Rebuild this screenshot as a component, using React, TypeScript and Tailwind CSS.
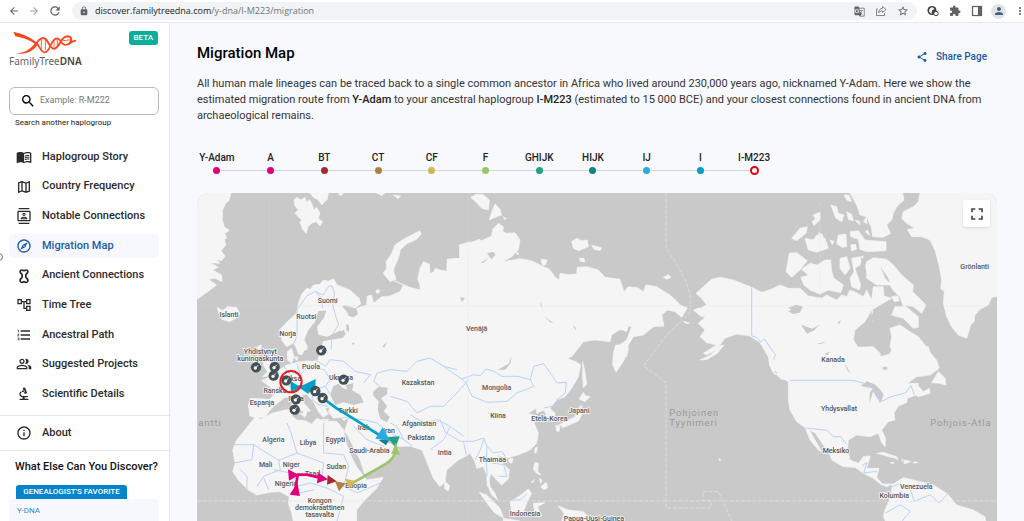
import React from "react";
import type { IconType } from "react-icons";
import {
  MdArrowBack,
  MdArrowForward,
  MdBiotech,
  MdExtension,
  MdFormatListNumbered,
  MdGTranslate,
  MdLock,
  MdMenuBook,
  MdMoreVert,
  MdOutlineAccountTree,
  MdOutlineContacts,
  MdOutlineExplore,
  MdOutlineInfo,
  MdOutlineMap,
  MdOutlinePeopleAlt,
  MdPerson,
  MdRefresh,
  MdSearch,
  MdShare,
  MdStarBorder,
  MdFullscreen,
} from "react-icons/md";

function BoneIcon({ className }: { className?: string }) {
  return (
    <svg viewBox="0 0 24 24" className={className} fill="none" stroke="currentColor" strokeWidth="2.6" strokeLinejoin="round">
      <path d="M9 3 C6.500 3 5.500 5 6.500 7 C8 8.500 9.500 9 9.500 12 C9.500 15 8 15.500 6.500 17 C5.500 19 6.500 21.500 9 21.500 C10.500 21.500 11 20.500 12 20.500 C13 20.500 13.500 21.500 15 21.500 C17.500 21.500 18.500 19 17.500 17 C16 15.500 14.500 15 14.500 12 C14.500 9 16 8.500 17.500 7 C18.500 5 17.500 3 15 3 C13.500 3 13 4 12 4 C11 4 10.500 3 9 3Z" />
    </svg>
  );
}

function ShareArrowIcon() {
  return (
    <svg viewBox="0 0 24 24" className="size-3" fill="none" stroke="#80868b" strokeWidth="2" strokeLinejoin="round">
      <path d="M6 8 H3 V21 H19 V16" />
      <path d="M15 3 L22 9 L15 15 V12 C11 12 8.500 13 7 16 C7 11 10 7 15 6.500Z" />
    </svg>
  );
}

function GlobeBadgeIcon() {
  return (
    <svg viewBox="0 0 24 24" className="size-3">
      <circle cx="10" cy="11" r="9" fill="#3c4043" />
      <path d="M5 8 L10 4 L15 8 L10 11 L9 18 L4 13Z" fill="#fff" />
      <circle cx="18" cy="17" r="4.500" fill="#fff" stroke="#3c4043" strokeWidth="2" />
    </svg>
  );
}

function SidePanelIcon() {
  return (
    <svg viewBox="0 0 24 24" className="size-3">
      <rect x="3" y="3" width="18" height="18" fill="none" stroke="#5f6368" strokeWidth="2.500" />
      <rect x="14" y="3" width="7" height="18" fill="#5f6368" />
    </svg>
  );
}

function Helix() {
  return (
    <svg viewBox="0 0 190 72" className="h-6 w-16" fill="none" stroke="#f9471d" strokeLinecap="round" aria-hidden="true">
      <path d="M0 2 C30 9 56 20 76 40 L70 44 C56 30 36 22 6 16Z" fill="#f9471d" stroke="none" />
      <path d="M6 68 C34 66 50 56 62 40 L72 42 C58 64 36 70 6 68Z" fill="#f9471d" stroke="none" />
      <path d="M66 42 C74 28 80 21 90 21 C106 22 106 53 122 53 C140 52 140 17 162 16 C174 16 178 26 168 38" strokeWidth="6" />
      <path d="M70 36 C80 48 82 64 94 64 C112 62 112 24 130 22 C144 22 142 42 156 42 C168 41 172 32 186 29" strokeWidth="5" />
      <path d="M84 28 V54 M96 26 V56 M122 28 V48 M132 26 V46 M150 29 L174 26" strokeWidth="2.500" />
    </svg>
  );
}

function BrowserBar() {
  return (
    <header className="flex h-[23px] shrink-0 items-center gap-3 border-b border-gray-200 bg-white pr-0.5 pl-2 text-[#5f6368]">
      <div className="flex w-[54px] shrink-0 items-center justify-between">
        <button aria-label="Back"><MdArrowBack className="size-3" /></button>
        <button aria-label="Forward"><MdArrowForward className="size-3 text-gray-400" /></button>
        <button aria-label="Reload"><MdRefresh className="size-3.5" /></button>
      </div>
      <div className="-ml-0.5 flex h-[18px] flex-1 items-center rounded-full bg-[#f1f3f4] pr-2 pl-[7px]">
        <MdLock className="size-2.5" />
        <span className="ml-1.5 font-['Open_Sans',sans-serif] text-[9px] text-[#70757a]">
          <span className="text-[#202124]">discover.familytreedna.com</span>/y-dna/I-M223/migration
        </span>
        <div className="ml-auto flex items-center gap-2.5">
          <button aria-label="Translate"><MdGTranslate className="size-[11px]" /></button>
          <button aria-label="Share"><ShareArrowIcon /></button>
          <button aria-label="Bookmark"><MdStarBorder className="size-3" /></button>
        </div>
      </div>
      <div className="-ml-0.5 flex items-center gap-2">
        <button aria-label="Data saver"><GlobeBadgeIcon /></button>
        <button aria-label="Extensions" className="ml-0.5"><MdExtension className="size-3" /></button>
        <button aria-label="Side panel" className="ml-0.5"><SidePanelIcon /></button>
        <button aria-label="Profile" className="flex size-[15px] items-center justify-center rounded-full bg-[#dfe3ea]">
          <MdPerson className="size-3 text-[#4a5a78]" />
        </button>
        <button aria-label="More" className="-mr-1"><MdMoreVert className="size-3" /></button>
      </div>
    </header>
  );
}

type Item = { label: string; icon: IconType | typeof BoneIcon; active?: boolean };

const items: Item[] = [
  { label: "Haplogroup Story", icon: MdMenuBook },
  { label: "Country Frequency", icon: MdOutlineMap },
  { label: "Notable Connections", icon: MdOutlineContacts },
  { label: "Migration Map", icon: MdOutlineExplore, active: true },
  { label: "Ancient Connections", icon: BoneIcon },
  { label: "Time Tree", icon: MdOutlineAccountTree },
  { label: "Ancestral Path", icon: MdFormatListNumbered },
  { label: "Suggested Projects", icon: MdOutlinePeopleAlt },
  { label: "Scientific Details", icon: MdBiotech },
];

function NavLink({ label, icon: Icon, active }: Item) {
  return (
    <a
      href="#"
      className={
        active
          ? "flex h-6 items-center gap-2.5 rounded bg-[#f7f8fd] pl-[7px] text-[11px] font-medium text-[#1b5ba5]"
          : "flex h-6 items-center gap-2.5 rounded pl-[7px] text-[11px] font-medium text-[#2b2b2b]"
      }
    >
      <Icon className="size-4" />
      {label}
    </a>
  );
}

function Sidebar() {
  return (
    <aside className="relative flex w-[170px] shrink-0 flex-col border-r border-gray-200 bg-white">
      <div className="flex items-start justify-between pt-2 pr-[11px] pl-[9px]">
        <a href="#" className="flex flex-col">
          <span className="pl-1"><Helix /></span>
          <span className="font-['Noto_Sans',sans-serif] text-[10px] leading-[13px] text-[#666]">
            FamilyTree<b className="font-semibold text-[#444]">DNA</b>
          </span>
        </a>
        <span className="rounded-[3px] bg-[#0aae9c] px-[5px] text-[8px] leading-[14px] font-medium text-white">BETA</span>
      </div>
      <div className="pt-[19px] pr-2.5 pl-[9px]">
        <div className="flex h-7 items-center gap-1 rounded-md border border-[#bbb] pl-2.5">
          <MdSearch className="size-4 shrink-0 text-black" />
          <input
            id="haplogroup"
            placeholder="Example: R-M222"
            className="w-full min-w-0 bg-transparent text-[9px] outline-none placeholder:text-[#777]"
          />
        </div>
        <label htmlFor="haplogroup" className="block pt-0.5 pl-1.5 text-[8px] leading-3 text-[#222]">
          Search another haplogroup
        </label>
      </div>
      <nav className="mt-4 flex h-[261px] shrink-0 flex-col justify-between pr-2.5 pl-[9px]">
        {items.map((item) => (
          <NavLink key={item.label} {...item} />
        ))}
      </nav>
      <div className="mt-[9px] border-y border-gray-200 px-[9px] py-[5px]">
        <NavLink label="About" icon={MdOutlineInfo} />
      </div>
      <h2 className="pt-2 pl-[15px] text-[11px] leading-4 font-medium whitespace-nowrap text-[#111]">What Else Can You Discover?</h2>
      <div className="pt-2.5 pr-2.5 pl-[9px]">
        <span className="ml-[7px] block h-[14px] w-[111px] rounded-t-[3px] bg-[#0284cc] text-center text-[8px] leading-[14px] font-medium whitespace-nowrap text-white">
          GENEALOGIST'S FAVORITE
        </span>
        <a href="#" className="block h-10 rounded bg-[#f7f8fd] pt-1.5 pl-2 text-[8px] leading-3 text-[#3088c5]">Y-DNA</a>
      </div>
      <span className="absolute top-[230px] -left-[5px] size-2 rounded-full border border-gray-500" />
    </aside>
  );
}

const steps = [
  { label: "Y-Adam", dot: "size-[7px] bg-[#e0007a]" },
  { label: "A", dot: "size-[7px] bg-[#e0007a]" },
  { label: "BT", dot: "size-[7px] bg-[#a3282f]" },
  { label: "CT", dot: "size-[7px] bg-[#b08045]" },
  { label: "CF", dot: "size-[7px] bg-[#d0b850]" },
  { label: "F", dot: "size-[7px] bg-[#9dc567]" },
  { label: "GHIJK", dot: "size-[7px] bg-[#27a186]" },
  { label: "HIJK", dot: "size-[7px] bg-[#14828b]" },
  { label: "IJ", dot: "size-[7px] bg-[#2aaae0]" },
  { label: "I", dot: "size-[7px] bg-[#00a0c4]" },
  { label: "I-M223", dot: "size-[9px] border-2 border-red-600 bg-white" },
];

function Timeline() {
  return (
    <div className="relative -ml-[7px] mt-7 w-[591px]">
      <span className="absolute right-[27px] bottom-1 left-[27px] h-px bg-[#d4d5d8]" />
      <ol className="relative grid grid-cols-11">
        {steps.map((s) => (
          <li key={s.label} className="flex flex-col items-center gap-0.5 text-[10px] leading-3 font-medium text-[#222]">
            {s.label}
            <span className="flex h-[9px] items-center">
              <span className={`rounded-full ${s.dot}`} />
            </span>
          </li>
        ))}
      </ol>
    </div>
  );
}

const markers = [
  [177, 523], [233, 522], [230, 548], [268, 562], [373, 472],
  [440, 560], [355, 594], [377, 615], [297, 619], [293, 650],
];

const countries: [number, number, string][] = [
  [96, 371, "Islanti"], [392, 330, "Suomi"], [328, 379, "Ruotsi"], [272, 429, "Norja"],
  [190, 482, "Yhdistynyt"], [190, 503, "kuningaskunta"], [342, 528, "Puola"], [432, 562, "Ukraina"],
  [284, 565, "Saksa"], [234, 599, "Ranska"], [195, 637, "Espanja"], [297, 624, "Italia"], [453, 661, "Turkki"],
  [663, 576, "Kazakstan"], [666, 699, "Afganistan"], [672, 741, "Pakistan"], [576, 720, "Iran"], [500, 710, "Irak"],
  [517, 781, "Saudi-Arabia"], [743, 786, "Intia"], [415, 746, "Egypti"], [333, 756, "Libya"], [229, 748, "Algeria"],
  [206, 822, "Mali"], [283, 822, "Niger"], [347, 848, "Tsad"], [418, 828, "Sudan"], [267, 878, "Nigeria"],
  [477, 885, "Etiopia"], [368, 931, "Kongon"], [368, 952, "demokraattinen"], [368, 973, "tasavalta"],
  [839, 413, "Venäjä"], [899, 591, "Mongolia"], [903, 674, "Kiina"], [1146, 659, "Japani"], [1057, 683, "Etelä-Korea"],
  [886, 806, "Thaimaa"], [984, 969, "Indonesia"], [1191, 983, "Papua-Uusi-Guinea"], [2333, 229, "Grönlanti"],
  [1908, 508, "Kanada"], [1926, 655, "Yhdysvallat"], [1917, 779, "Meksiko"], [2158, 887, "Venezuela"], [2092, 916, "Kolumbia"],
];

function WorldMap() {
  return (
    <div className="relative mt-[18px] overflow-hidden rounded-xl">
      <svg viewBox="0 0 2400 1080" className="block w-full bg-[#c9c9c9] font-[Roboto,sans-serif]" role="img" aria-label="Migration route from Y-Adam to I-M223">
        <g fill="#f5f5f5" stroke="#f5f5f5" strokeWidth="2" strokeLinejoin="round">
          <g transform="translate(-21 -9)">
            <path d="M21 5 L123 9 L117 32 108 38 98 60 97 90 103 110 118 122 104 130 110 143 103 150 108 165 93 182 105 198 95 212 78 208 90 220 60 218 85 232 68 240 95 255 96 275 75 265 55 268 80 285 60 300 35 318 21 328Z" />
            <path d="M312 30 L322 22 332 30 345 22 350 38 358 28 367 45 372 60 380 52 390 70 385 85 398 95 390 108 378 95 365 100 355 108 348 130 338 118 330 98 335 90 325 80 315 70 325 60 315 48Z M360 9 L415 9 412 28 395 45 385 30 370 22Z M445 12 l15 -3 -8 9Z M560 9 h25 l-10 8Z M610 15 l22 3 -8 8Z" />
            <path d="M82 352 L98 362 112 350 140 352 150 372 138 385 118 395 95 388 98 375 86 370Z" />
            <path d="M690 122 L694 132 680 148 650 162 632 178 625 205 610 240 618 268 600 275 580 250 590 235 588 215 605 190 615 165 640 148 665 135Z" />
            <path d="M335 312 L350 295 362 298 370 285 390 283 400 270 415 274 430 266 442 285 480 300 508 325 512 342 495 354 465 345 456 350 470 365 475 378 490 383 505 372 500 355 530 345 532 318 545 315 550 340 575 320 600 318 630 305 640 285 612 272 660 292 690 300 705 318 718 320 715 308 697 300 683 268 690 235 700 215 718 222 720 250 722 285 735 300 752 305 738 290 728 260 735 235 750 240 765 265 785 262 770 240 772 208 810 205 808 165 840 155 V480 H325 L310 460 290 470 275 450 270 418 292 395 320 370 325 340Z M558 300 l12 0 -4 10 -8 -2Z" />
            <path d="M200 470 l15 -5 -5 15Z" />
          </g>
          <g transform="translate(-21 441)">
            <path d="M310 0 L350 0 352 12 335 45 325 42 318 20Z M292 35 L305 25 312 50 305 70 292 60Z M312 52 l12 -2 -3 12Z" />
            <path d="M395 -10 H850 V325 L800 350 790 368 768 385 765 405 757 425 745 433 735 400 722 375 720 345 710 350 700 332 660 318 620 320 600 300 575 290 552 262 560 285 578 305 600 310 627 330 610 355 580 375 550 388 524 402 510 360 490 320 472 285 463 275 475 240 470 230 430 235 415 215 420 202 405 205 415 222 400 232 385 215 372 188 350 162 336 165 342 190 362 212 350 215 348 228 338 215 318 190 305 172 285 172 262 190 245 205 225 230 200 235 180 228 175 195 182 175 240 178 250 165 245 145 215 122 230 115 250 105 270 88 290 75 325 66 375 60 378 30 392 35Z" />
            <path d="M195 232 L212 238 245 220 285 210 310 208 306 228 320 240 345 242 365 252 380 235 402 243 440 244 460 268 466 300 482 345 500 380 515 400 530 420 580 412 560 445 520 485 500 510 500 640 330 640 305 520 295 490 298 470 270 455 240 457 200 465 175 450 145 420 128 395 135 370 128 330 140 300 165 270 180 250Z" />
            <path d="M222 50 L238 55 245 78 265 88 255 105 218 110 232 95 220 75Z M185 75 L200 62 212 72 206 92 186 95Z M345 222 L328 220 345 232Z M306 185 L314 190 312 215 304 210Z M395 238 h22 l-5 4Z M455 236 l16 -2 -8 8Z" />
            <path d="M766 425 l13 12 -5 13 -9 -4Z" />
          </g>
          <g transform="translate(729 -9)">
            <path d="M-60 500 L-60 260 0 240 30 245 22 208 60 205 60 180 85 160 118 148 125 152 155 138 158 118 175 100 190 110 188 124 198 130 225 128 240 150 235 180 215 200 190 215 240 206 275 212 300 225 328 238 345 260 357 270 360 250 385 254 410 252 412 232 440 230 475 240 495 262 540 268 552 305 565 290 595 294 610 306 618 285 650 290 690 315 712 335 720 345 742 354 725 382 705 365 682 360 665 375 672 408 640 410 610 435 580 440 565 465 560 500 520 500 530 470 560 450 575 410 565 408 560 425 540 418 515 435 510 455 465 450 430 455 395 500Z" />
            <path d="M92 22 L110 12 130 14 148 30 145 60 125 55 110 38Z M165 42 L180 58 185 75 165 82 148 90 155 65Z M190 80 l10 6 -8 2Z M395 155 L410 145 425 152 442 150 445 170 415 182 400 175Z M455 165 L485 174 480 182 462 178Z M418 205 L432 205 435 215 422 215Z M670 262 L685 254 693 262 680 268Z M303 208 l18 2 -4 14 -10 2Z M228 188 l8 0 -2 8Z M730 393 l18 6 -10 2Z" />
          </g>
          <g transform="translate(729 456)">
            <path d="M-60 -10 H425 L385 42 408 50 422 60 415 95 395 130 375 155 350 165 330 190 345 205 345 220 325 225 312 195 290 205 288 190 265 205 290 212 282 232 295 265 290 295 270 315 240 328 215 335 200 340 172 330 188 355 208 375 205 402 185 420 165 400 152 385 148 405 150 425 165 445 173 465 155 450 142 420 140 390 130 365 110 370 105 350 90 325 75 335 55 345 20 375 15 410 0 425 -20 400 -60 300Z" />
            <path d="M527 0 L558 0 566 12 550 50 528 82 518 60 520 25Z M428 50 L435 80 440 118 430 128 428 100Z M418 162 L430 142 436 152 450 155 435 170Z M425 180 L428 205 415 228 388 240 375 245 355 240 385 225 405 215 415 190Z M348 240 l12 5 -3 15 -8 -3Z M365 242 l12 -2 -8 9Z M285 310 L292 306 290 322 284 325Z M207 342 l12 -2 -3 14 -9 -2Z M285 352 L295 355 293 378 303 390 290 385 280 372Z M302 425 L318 412 323 428 312 434Z M298 400 l8 5 -4 10Z M275 410 l8 -6 -6 10Z" />
            <path d="M118 442 L140 450 180 490 190 518 165 505 145 480Z M210 470 L240 452 265 432 275 445 262 470 250 500 215 500Z M280 475 L315 473 292 485 305 512 285 508Z M355 483 L385 495 430 500 460 530 365 530 372 505Z M190 520 L240 528 242 536 190 528Z M14 412 L28 428 24 438 14 430Z" />
            <path d="M780 45 l30 -14 30 -28 12 -3 -20 25 -30 18Z" />
          </g>
          <g transform="translate(1509 -9)">
            <path d="M60 262 L100 270 155 292 185 307 215 297 240 285 265 295 300 295 325 318 365 325 380 315 410 330 425 315 440 320 450 300 470 308 490 320 500 300 515 330 520 290 550 290 552 318 575 325 540 345 515 360 495 395 465 420 460 450 480 480 540 500 580 490 570 470 575 440 570 415 600 405 630 425 655 440 675 465 700 500 712 530 690 530 H210 L205 500 180 458 150 438 110 432 75 445 50 478 20 495 10 490 50 465 20 458 0 440 15 420 -5 400 10 385 -20 360 20 345 5 325 -12 310 10 290 35 268Z" />
            <path d="M660 9 H900 V318 L875 322 865 345 840 358 825 375 822 395 812 405 800 445 775 435 755 410 740 380 730 340 733 305 722 295 725 270 718 230 705 180 690 150 665 140 635 140 622 118 645 115 620 100 605 85 610 65 640 50 655 35Z" />
            <path d="M268 190 L290 188 322 212 300 240 275 262 258 245Z M305 238 L330 220 352 225 375 210 392 210 395 245 402 265 430 285 422 308 385 300 360 312 330 300 312 285 302 262 325 255Z" />
            <path d="M500 215 L520 203 560 208 580 225 605 255 640 285 638 305 678 345 665 370 640 350 612 345 655 380 655 412 640 415 610 385 575 375 585 350 610 350 600 320 578 300 570 285 530 285 500 265 495 235Z M515 360 L530 370 555 390 535 395 518 392Z M575 320 l18 -3 5 15 -15 3Z" />
            <path d="M275 145 L300 115 322 110 318 130 290 152Z M315 145 L340 150 350 135 375 145 385 175 350 187 325 180Z M355 128 l12 5 4 20 -8 2Z M392 45 L410 50 415 70 432 75 425 95 408 85Z M340 75 l20 -8 0 22 -18 18 -6 -12 10 -8Z M440 65 l15 8 5 20 -15 -5Z M415 135 L438 132 440 170 425 172 410 160Z M450 125 L475 122 495 150 558 155 558 182 500 185 480 178 475 148 452 140Z M452 165 l15 -2 2 15 -14 5Z M420 205 L440 200 450 235 435 255 420 235Z M455 205 L490 198 480 225 465 235 482 285 478 300 455 290 450 265 462 245Z" />
            <path d="M450 9 H608 L612 30 590 50 580 70 575 90 560 105 572 130 550 142 515 140 495 125 515 110 490 95 500 80 480 75 470 45Z M432 15 l15 0 8 20 -15 -5Z M465 90 l14 5 0 10Z M390 150 l12 4 -5 10Z M725 278 l25 0 -2 20 -18 0Z" />
          </g>
          <g transform="translate(1509 471)">
            <path d="M205 0 L212 45 240 78 265 95 265 150 270 180 290 215 315 232 330 270 355 300 365 305 345 270 328 240 345 248 370 285 390 315 395 330 430 350 465 352 490 370 520 385 535 400 560 410 577 402 572 440 555 480 550 500 570 540 580 640 H880 L855 500 820 480 770 465 750 440 740 430 700 405 640 390 610 383 580 402 548 402 530 382 537 355 500 355 511 318 490 320 475 340 450 330 443 300 445 270 470 255 510 260 535 250 545 278 555 290 557 265 545 240 565 215 585 210 582 190 595 168 620 158 622 145 648 135 655 140 690 130 688 115 670 125 655 108 655 100 622 100 650 80 690 75 718 55 710 30 690 10 685 -10 580 -10 565 20 562 60 548 60 540 10 520 -10Z" />
            <path d="M695 98 L715 65 735 85 738 105 718 100Z M530 310 L550 307 590 320 595 328 560 318Z M605 328 L632 335 612 342Z M572 337 h10 v3 h-10Z M640 336 h12 v3 h-12Z M208 35 l15 15 2 25 -10 -15Z M225 70 l12 2 22 18 -14 -2Z M58 325 l4 6 -4 2Z" />
          </g>
        </g>

        <g fill="#c9c9c9">
          <path d="M364 354 L388 353 380 376 360 401 365 426 390 431 420 418 432 412 435 435 402 440 378 445 372 466 362 500 345 505 318 498 328 480 332 460 322 440 334 411 354 386Z" />
          <path d="M400 606 L408 580 425 572 436 584 452 590 445 576 470 570 465 592 490 606 500 628 470 636 440 628 415 636Z M528 596 L545 582 572 584 570 604 552 616 570 640 560 655 578 672 570 688 550 678 542 650 545 625 530 610Z" />
          <path d="M430 418 l10 -8 6 12 -8 12 -10 -2Z M448 392 l8 6 0 20 -8 -8Z M463 455 l6 -8 4 6Z M556 460 l14 -12 -8 16Z M902 530 L935 512 943 492 941 510 925 530Z M790 312 l14 4 -10 12Z M1040 370 L1070 390 1060 388Z M870 180 l20 -3 5 10 -12 12Z M850 210 l25 -15 -15 14Z M1126 395 l12 20 -3 -12Z M1032 328 l4 20 -6 -14Z" />
          <path d="M1772 345 l26 -10 20 6 -10 18 -20 4 -14 -8 10 -6Z M1812 395 l34 12 22 -13 -16 18 -22 10Z M1860 452 l28 -6 -18 8Z M1882 482 l16 -6 -6 10Z M1922 388 l10 -6 -6 12Z M1940 510 l12 24 8 6 -14 -22Z" />
          <path d="M1990 578 L2010 565 2035 575 2050 590 2060 605 2052 628 2040 615 2028 595 2018 630 2018 600 2028 585 2005 582Z" />
          <path d="M2030 350 l25 -8 25 18 -8 25 -40 8 -10 -20Z M2012 110 l16 35 -6 -40 -12 -30Z M1990 190 l10 40 10 20 -8 -45Z M2050 220 l20 30 10 20 -14 -12Z M2170 390 l10 10 14 4Z" />
          <path d="M455 130 l15 20 -6 12Z M690 30 l6 -5 -2 8Z M1502 330 l20 8 -14 8Z M1500 375 l24 -6 -8 12Z" opacity=".8" />
        </g>

        <g fill="none" stroke="#b9d2fa" strokeWidth="3" strokeLinejoin="round">
          <path d="M290 452 L300 430 300 350 318 325 330 308 355 295 378 306 395 280 405 278 412 300 408 340 418 375 425 395 405 425 402 470 M355 295 L376 318 376 345" />
          <path d="M260 520 L280 545 268 570 290 590 330 580 350 590 385 580 400 560 382 530 330 520 312 545 290 540 M355 500 L385 520 400 500 440 505 475 535 520 545 500 570 M350 590 L345 620 365 635 395 640 M300 512 L310 545 M385 580 L400 605" />
          <path d="M560 590 L530 565 540 540 580 530 630 535 660 505 700 495 740 520 780 530 M580 610 L630 625 660 660 700 640 740 640 780 600 815 560 M450 675 L500 680 540 690 580 720 620 740 600 700 580 690 M620 740 L645 758 M640 665 L680 690 720 680 760 700 740 740 700 770 M760 700 L800 730 M470 700 L510 740 560 760" />
          <path d="M110 755 L170 755 245 802 300 780 282 720 270 690 M380 690 L380 780 440 785 M300 780 L380 810 375 850 M245 802 L250 830 200 850 180 880 M170 755 L165 800 110 810 M230 830 L280 840 300 870 M440 785 L455 820 440 880 480 900 550 870 M300 880 L340 870 390 885 440 910 420 985 M280 900 L310 900 350 890 M130 830 L150 850 150 890 M200 855 L215 890" />
          <path d="M729 512 L760 535 795 558 830 545 850 548 868 528 890 535 915 550 960 550 1000 560 1010 580 960 600 930 625 870 628 825 610 810 575 795 558 M1000 560 L1010 520 1040 512 1060 540 1080 570 1108 568 1105 600 1080 620 1085 635 1040 645 M729 680 L745 718 790 745 830 745 860 735 870 760 890 780 915 775 930 800 M800 748 L808 785 M860 740 L850 770 835 800 M870 760 L868 800 870 850 M885 810 L920 815 930 850 905 850" />
          <path d="M1664 283 V428 L1682 435 1690 448 1702 438 1735 485 1730 500 M1778 562 H1968 L2005 572 2040 595 2048 628 2085 610 2125 600 2142 578 2152 605 M1825 705 L1890 712 1910 732 1930 730 1950 755 M1995 818 L2010 808 2000 840 2040 835 M2030 860 L2050 875 M2078 885 L2110 870 M2140 890 L2152 925 2200 905 2225 930 2255 900 M2065 960 L2110 935 2140 955 2115 985" />
          <path d="M940 922 L970 920 990 902 M2120 800 v12 M865 900 l20 15" />
        </g>

        <g fill="none" stroke="#e6e6e6" strokeWidth="2" strokeDasharray="12 5">
          <path d="M0 924 H2400 M1407 0 V167 Q1475 260 1480 315 V358 L1410 425 1340 518 1407 569 V945 H1542 V922 H1518 V896 H1565 L1605 984" />
          <path d="M1870 30 V320" opacity=".6" />
        </g>
        <path d="M218 0 V330 M812 0 V980 M0 338 H2400" stroke="#dedede" strokeWidth="1" opacity=".5" />

        <g className="fill-[#555] text-[21px] font-medium" textAnchor="middle" stroke="#f5f5f5" strokeWidth="5" paintOrder="stroke">
          {countries.map(([x, y, name]) => (
            <text key={name} x={x} y={y}>{name}</text>
          ))}
        </g>
        <g className="fill-[#999] text-[28px] tracking-widest">
          <text x="1417" y="668">Pohjoinen</text>
          <text x="1417" y="698">Tyynimeri</text>
          <text x="2200" y="698">Pohjois-Atla</text>
          <text x="4" y="698">antti</text>
        </g>

        <g transform="translate(-21 441)">
          <g fill="none" strokeWidth="8" strokeLinejoin="round">
            <path d="M325 140 L370 138 398 174 440 205 500 242 575 290" stroke="#00a0c6" />
            <path d="M617 335 Q612 355 590 370 L490 428" stroke="#9dc567" />
            <path d="M316 450 L323 404 350 404 400 415" stroke="#e0007a" />
          </g>
          <path d="M301 123 L332 141 303 158Z M377 117 L376 140 354 161 326 142Z" fill="#00a0c6" />
          <path d="M566 300 L600 296 588 316Z" fill="#14828b" />
          <path d="M590 291 L629 289 617 322Z" fill="#27a186" />
          <path d="M578 262 L600 302 556 296Z" fill="#2aaae0" />
          <path d="M617 308 L630 344 604 342Z" fill="#9dc567" />
          <path d="M465 416 L500 424 477 445Z" fill="#d4b850" />
          <path d="M435 424 L467 430 447 454Z" fill="#b08045" />
          <path d="M385 398 L414 418 381 430Z M294 388 L327 405 297 422Z M322 428 L330 468 299 464Z" fill="#e0007a" />
          <path d="M413 405 L440 424 411 434Z" fill="#a3282f" />
        </g>
        {markers.map(([x, y]) => (
          <g key={`${x}-${y}`} transform={`translate(${x} ${y})`}>
            <circle r="15.500" fill="#435156" />
            <circle cx="-2" cy="2" r="5" fill="#f5f5f5" />
            <path d="M1 -1 L6 -6" stroke="#f5f5f5" strokeWidth="3" strokeLinecap="round" />
          </g>
        ))}
        <circle cx="282" cy="566" r="32" fill="none" stroke="#f01820" strokeWidth="6" />
      </svg>
      <button aria-label="Toggle fullscreen" className="absolute top-[7px] right-[7px] flex size-[27px] items-center justify-center rounded-[2px] bg-white shadow">
        <MdFullscreen className="size-5 text-[#444]" />
      </button>
    </div>
  );
}

export default function App() {
  return (
    <div className="flex h-screen flex-col overflow-hidden bg-[#f8f9fd] font-[Roboto,sans-serif]">
      <BrowserBar />
      <div className="flex min-h-0 flex-1 overflow-hidden">
        <Sidebar />
        <main className="min-w-0 flex-1 px-[27px] pt-5">
          <div className="flex items-start justify-between pr-2.5">
            <h1 className="text-[15px] leading-5 font-medium text-black">Migration Map</h1>
            <button className="flex items-center gap-2 pt-1.5 text-[10px] leading-4 font-medium text-[#1b5ba5]">
              <MdShare className="size-3" />
              Share Page
            </button>
          </div>
          <p className="mt-[11px] text-[11px] leading-4 text-[#333]">
            All human male lineages can be traced back to a single common ancestor in Africa who lived around 230,000 years ago, nicknamed Y-Adam. Here we show the estimated migration route from <b className="font-medium text-[#222]">Y-Adam</b> to your ancestral haplogroup{" "}
            <b className="font-medium text-[#222]">I-M223</b> (estimated to 15 000 BCE) and your closest connections found in ancient DNA from archaeological remains.
          </p>
          <Timeline />
          <WorldMap />
        </main>
      </div>
    </div>
  );
}
